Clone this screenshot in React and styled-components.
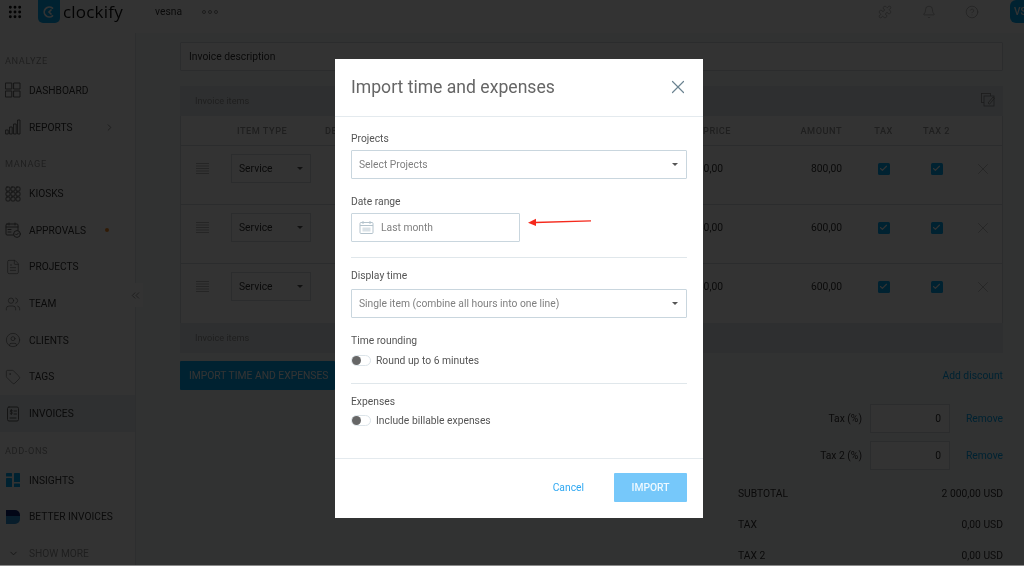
import React from 'react';
import styled, { createGlobalStyle } from 'styled-components';
import { FileText, Users, CircleUser, Tag, ChevronDown, ChevronRight, ChevronsLeft, Bell, CircleHelp, Puzzle, X, Check, Grip } from 'lucide-react';

const Global = createGlobalStyle`
  html, body { margin: 0; padding: 0; background: #8a8a8a; overflow: hidden; }
  body { font-family: Roboto, "Liberation Sans", sans-serif; }
  * { box-sizing: border-box; }
`;

const Page = styled.div`
  position: relative; width: 1024px; height: 565px; overflow: hidden;
  background: #fff; color: #333; font-size: 10.3px; filter: blur(.4px);
`;
const TopBar = styled.header`
  height: 33px; display: flex; align-items: flex-start; background: #fff;
`;
const Apps = styled.div`
  width: 38px; height: 24px; padding-left: 7px; display: flex; align-items: center;
`;
const LogoMark = styled.div`
  width: 22px; height: 23px; border-radius: 0 0 5px 5px; background: #03a9f4;
  display: flex; align-items: center; justify-content: center;
`;
const LogoText = styled.span`
  margin-left: 3px; font-size: 17px; line-height: 23px; font-weight: 500; letter-spacing: .2px; color: #111;
  font-family: "Open Sans", Roboto, sans-serif; width: 92px; 
`;
const Workspace = styled.span`font-size: 10.3px; line-height: 24px; width: 47px;`;
const Dots = styled.div`
  display: flex; gap: 2px; height: 24px; align-items: center;
`;
const Dot = styled.i`
  width: 4px; height: 4px; border-radius: 50%; border: 1px solid #888; display: block;
`;
const TopRight = styled.div`
  margin-left: auto; display: flex; align-items: flex-start; color: #888;
`;
const TopIcon = styled.div`
  width: 43.5px; height: 23px; display: flex; align-items: center; justify-content: center;
`;
const Avatar = styled.div`
  width: 14px; height: 23px; margin-left: 16px; border-radius: 6px 0 0 6px; background: #03a9f4; color: #fff;
  font-size: 10px; font-weight: 500; line-height: 23px; padding-left: 4px; overflow: hidden; white-space: nowrap;
`;
const Body = styled.div`display: flex; height: 532px;`;
const Sidebar = styled.nav`
  position: relative; width: 136px; flex: none; border-right: 1px solid #dfe5e9; padding-top: 17px;
`;
const Section = styled.div`
  height: 22px; line-height: 22px; padding-left: 5px; font-size: 9.2px; letter-spacing: .6px; color: #9a9a9a;
`;
const Item = styled.div`
  height: 36.7px; display: flex; align-items: center; padding-left: 5px; gap: 8px; font-size: 10.2px; color: ${p => p.$muted ? '#999' : '#333'};
  background: ${p => p.$active ? '#e8eef2' : 'transparent'};
`;
const IconBox = styled.span`
  width: 16px; height: 16px; flex: none; display: flex; align-items: center; justify-content: center; color: #666;
`;
const ItemGap = styled.div`height: 7.8px;`;
const Notice = styled.i`
  width: 4px; height: 4px; border-radius: 50%; background: #f5871f; margin-left: 11px;
`;
const Caret = styled.span`margin-left: 24px; display: flex; color: #888;`;
const Collapse = styled.div`
  position: absolute; right: -8px; top: 250px; width: 16px; height: 24px; background: #fff;
  display: flex; align-items: center; justify-content: center; color: #666;
`;
const Main = styled.main`
  flex: 1; background: #f6f8f9; padding: 9px 21px 0 44px; min-width: 0;
`;
const DescInput = styled.div`
  height: 29px; line-height: 27px; border: 1px solid #d5dde2; background: #fff; padding-left: 8px; border-radius: 1px;
`;
const Band = styled.div`
  height: 30px; margin-top: ${p => p.$top || 0}px; background: #e4eaee; display: flex; align-items: center; justify-content: space-between;
  padding: 0 7px 2px 15px; font-size: 9.2px; color: #999;
`;
const Table = styled.div`border: 1px solid #d5dde2; border-width: 0 1px; background: #fff;`;
const Cols = styled.div`
  display: grid; grid-template-columns: 50px 94px 290px 116px 126px 53px 53px 1fr; border-bottom: 1px solid #d5dde2;
`;
const HeadRow = styled(Cols)`
  height: 30px; align-items: center; font-size: 9.2px; letter-spacing: .5px; color: #999; font-weight: 500;
`;
const Row = styled(Cols)`
  height: 59px; padding-top: 8px; align-items: start;
  &:last-child { border-bottom: 0; }
`;
const HeadCell = styled.div`
  white-space: nowrap; text-align: ${p => p.$align || 'left'}; padding: ${p => p.$pad || 0};
`;
const Cell = styled.div`
  height: 29px; display: flex; align-items: center; justify-content: ${p => p.$justify || 'flex-start'}; padding: ${p => p.$pad || 0}; color: ${p => p.$color || 'inherit'};
`;
const SmallSelect = styled.div`
  width: 80px; height: 29px; border: 1px solid #d5dde2; padding: 0 7px; display: flex; align-items: center; justify-content: space-between;
`;
const TriCaret = styled.i`
  display: block; width: 0; height: 0; border: 3px solid transparent; border-top-color: #555; border-bottom-width: 0;
`;
const Check2 = styled.span`
  width: 12px; height: 12px; border-radius: 1.5px; background: #03a9f4; color: #fff; display: flex; align-items: center; justify-content: center;
`;
const Actions = styled.div`
  display: flex; align-items: center; justify-content: space-between; margin-top: 8px;
`;
const ImportBtn = styled.div`
  width: 155px; height: 29px; background: #03a9f4; color: #fff; line-height: 29px; padding-left: 9px; border-radius: 1px; white-space: nowrap; overflow: hidden;
`;
const Link = styled.span`color: #03a9f4;`;
const TaxRow = styled.div`
  display: flex; justify-content: flex-end; align-items: center; height: 29px; margin-top: ${p => p.$top}px;
`;
const TaxBox = styled.div`
  width: 80px; height: 29px; margin: 0 16px 0 8px; border: 1px solid #d5dde2; background: #fff; text-align: right; line-height: 27px; padding-right: 8px;
`;
const TaxLink = styled(Link)`width: 37px; text-align: right;`;
const Totals = styled.div`margin: 8px 0 0 558px;`;
const Total = styled.div`
  display: flex; justify-content: space-between; height: 31px; align-items: center;
`;
const Overlay = styled.div`
  position: absolute; inset: 0; background: rgba(0,0,0,.8); padding: 59px 0 0 335px;
`;
const Modal = styled.section`
  position: relative; width: 368px; height: 458.5px; background: #fff; color: #555; display: flex; flex-direction: column;
`;
const ModalHead = styled.div`
  height: 57.5px; flex: none; border-bottom: 1px solid #e4eaee; display: flex; align-items: center; justify-content: space-between; padding: 0 14px 0 16px;
`;
const Title = styled.h2`
  margin: 0; font-size: 17.6px; font-weight: 400; color: #666;
`;
const CloseIcon = styled.span`display: flex; color: #6b8391;`;
const ModalBody = styled.div`flex: 1; padding: 15px 16px 0;`;
const Label = styled.div`
  height: 14px; line-height: 14px; color: #555; margin-top: ${p => p.$top || 0}px;
`;
const Picker = styled.div`
  height: 29px; width: ${p => p.$w || 336}px; margin-top: ${p => p.$top ?? 4}px; border: 1px solid #c9d6de; border-radius: 1px; padding: 0 8px 0 7px; display: flex; align-items: center; gap: 7px; color: #808080;
`;
const PickerText = styled.span`flex: 1;`;
const Divider = styled.div`height: 1px; background: #e0e7eb; margin-top: ${p => p.$top}px;`;
const SwitchRow = styled.div`display: flex; align-items: center; gap: 5px; height: 14px; margin-top: ${p => p.$top}px; color: #555;`;
const Track = styled.span`
  width: 20px; height: 11px; border: 1px solid #dce4e9; border-radius: 6px; background: #fff; position: relative; display: block; flex: none;
`;
const Knob = styled.i`
  position: absolute; left: 0; top: 0; width: 9px; height: 9px; border-radius: 50%; background: #666;
`;
const ModalFoot = styled.div`
  height: 59.5px; flex: none; border-top: 1px solid #e4eaee; display: flex; align-items: center; justify-content: flex-end; padding: 0 16px 2px 0; gap: 30px;
`;
const Cancel = styled.span`color: #2fa8f2;`;
const SubmitBtn = styled.div`
  width: 73px; height: 29px; background: #76c8fa; color: #eef9ff; font-weight: 500; text-align: center; line-height: 29px; border-radius: 1px;
`;
const Arrow = styled.svg`position: absolute; left: 192px; top: 157px;`;

const S = { fill: 'none', stroke: 'currentColor', strokeWidth: 1, strokeLinecap: 'round', strokeLinejoin: 'round' };
const Svg = ({ children, size = 16 }) => <svg width={size} height={size} viewBox="0 0 16 16" {...S}>{children}</svg>;

const DashIcon = () => <Svg><rect x=".8" y="1" width="6" height="6" /><rect x="9" y="1" width="6" height="6" /><rect x=".8" y="9" width="6" height="6" /><rect x="9" y="9" width="6" height="6" /></Svg>;
const ReportsIcon = () => <Svg><rect x="1" y="11" width="2.2" height="4" /><rect x="5" y="8" width="2.2" height="7" /><rect x="9" y="5" width="2.2" height="10" /><rect x="13" y="1" width="2" height="14" /></Svg>;
const KioskIcon = () => <Svg>{[1, 6, 11].flatMap(y => [1, 6, 11].map(x => <rect key={`${x}${y}`} x={x} y={y} width="4" height="4" rx="1" />))}</Svg>;
const ApprovalIcon = () => <Svg><rect x="1" y="2" width="12" height="11" rx="1" /><path d="M1 5h12M4 1v2M10 1v2M3 7.5h3M3 10h3" /><circle cx="12" cy="12" r="3.4" fill="#fff" /><path d="M10.5 12l1 1 2-2" /></Svg>;
const InvoiceIcon = () => <Svg><rect x="2.5" y="1" width="11" height="14" rx="1.5" /><path d="M9 5h2.5M9 8h2.5M5 12h6M6.3 3.5v5M7.4 4.6c-.8-.7-2.2-.4-2.2.5 0 1.100 2.200.8 2.200 1.900 0 .9-1.500 1.200-2.300.5" /></Svg>;
const InsightsIcon = () => <svg width="16" height="16" viewBox="0 0 16 16"><g fill="#03a9f4"><rect x="1" y="1" width="6" height="3.500" rx=".6" /><rect x="1" y="6" width="6" height="9" rx=".6" /><rect x="9" y="1" width="6" height="9" rx=".6" /><rect x="9" y="11.500" width="6" height="3.500" rx=".6" /></g></svg>;
const BetterIcon = () => <svg width="16" height="16" viewBox="0 0 16 16"><path d="M1 1h9a5 5 0 0 1 5 5v1H1z" fill="#0d1e6e" /><path d="M1 7h14v3a5 5 0 0 1-5 5H1z" fill="#2b8fd6" /></svg>;
const CalIcon = () => <svg width="15" height="15" viewBox="0 0 15 15" fill="none" stroke="#b4c3cc"><rect x="1" y="2.500" width="13" height="11" rx="1" /><path d="M1 5.500h13M4 1v3M11 1v3" /><rect x="3.500" y="7.500" width="8" height="4" fill="#d9e1e6" stroke="none" /></svg>;
const DragIcon = () => <svg width="13" height="11" viewBox="0 0 13 11" stroke="#999" strokeWidth=".7"><path d="M0 .5h13M0 3h13M0 5.500h13M0 8h13M0 10.500h13" /></svg>;
const CopyEdit = () => <svg width="15" height="14" viewBox="0 0 15 14" fill="none" stroke="#888" strokeWidth=".8"><rect x=".5" y=".5" width="9" height="9" /><rect x="3" y="3" width="10" height="10" fill="#e4eaee" /><path d="M7 10l5-6 1.500 1.200-5 6z" /></svg>;
const ClockMark = () => <svg width="14" height="14" viewBox="0 0 14 14" fill="none" stroke="#fff" strokeWidth="1.700" strokeLinecap="round"><path d="M10.500 3.200A5 5 0 1 0 10.500 10.800" /><path d="M9 5L7 7l2 2" /></svg>;

const NavItem = ({ icon, children, ...rest }) => (
  <Item {...rest}><IconBox>{icon}</IconBox>{children}</Item>
);

const rows = [['00,00', '800,00'], ['50,00', '600,00'], ['50,00', '600,00']];

export default function App() {
  return (
    <Page>
      <Global />
      <TopBar>
        <Apps><Grip size={16} strokeWidth={2.4} color="#111" /></Apps>
        <LogoMark><ClockMark /></LogoMark>
        <LogoText>clockify</LogoText>
        <Workspace>vesna</Workspace>
        <Dots><Dot /><Dot /><Dot /></Dots>
        <TopRight>
          <TopIcon><Puzzle size={14} strokeWidth={1} /></TopIcon>
          <TopIcon><Bell size={14} strokeWidth={1} /></TopIcon>
          <TopIcon><CircleHelp size={14} strokeWidth={1} /></TopIcon>
          <Avatar>VS</Avatar>
        </TopRight>
      </TopBar>
      <Body>
        <Sidebar>
          <Section>ANALYZE</Section>
          <NavItem icon={<DashIcon />}>DASHBOARD</NavItem>
          <NavItem icon={<ReportsIcon />}>REPORTS<Caret><ChevronRight size={11} /></Caret></NavItem>
          <ItemGap />
          <Section>MANAGE</Section>
          <NavItem icon={<KioskIcon />}>KIOSKS</NavItem>
          <NavItem icon={<ApprovalIcon />}>APPROVALS<Notice /></NavItem>
          <NavItem icon={<FileText size={16} strokeWidth={1} />}>PROJECTS</NavItem>
          <NavItem icon={<Users size={16} strokeWidth={1} />}>TEAM</NavItem>
          <NavItem icon={<CircleUser size={16} strokeWidth={1} />}>CLIENTS</NavItem>
          <NavItem icon={<Tag size={16} strokeWidth={1} />}>TAGS</NavItem>
          <NavItem $active icon={<InvoiceIcon />}>INVOICES</NavItem>
          <ItemGap />
          <Section>ADD-ONS</Section>
          <NavItem icon={<InsightsIcon />}>INSIGHTS</NavItem>
          <NavItem icon={<BetterIcon />}>BETTER INVOICES</NavItem>
          <NavItem $muted icon={<ChevronDown size={11} />}>SHOW MORE</NavItem>
          <Collapse><ChevronsLeft size={13} strokeWidth={1.2} /></Collapse>
        </Sidebar>
        <Main>
          <DescInput>Invoice description</DescInput>
          <Band $top={15}>Invoice items<CopyEdit /></Band>
          <Table>
            <HeadRow>
              <span />
              <HeadCell $pad="0 0 0 6px">ITEM TYPE</HeadCell>
              <HeadCell>DESCRIPTION</HeadCell>
              <HeadCell $align="right">PRICE</HeadCell>
              <HeadCell $align="right" $pad="0 15px 0 0">AMOUNT</HeadCell>
              <HeadCell $align="center">TAX</HeadCell>
              <HeadCell $align="center">TAX 2</HeadCell>
              <span />
            </HeadRow>
            {rows.map(([price, amount], i) => (
              <Row key={i}>
                <Cell $justify="center" $pad="0 8px 0 0"><DragIcon /></Cell>
                <Cell><SmallSelect>Service<TriCaret /></SmallSelect></Cell>
                <span />
                <Cell $justify="flex-end" $pad="0 8px 0 0">{price}</Cell>
                <Cell $justify="flex-end" $pad="0 15px 0 0">{amount}</Cell>
                <Cell $justify="center"><Check2><Check size={9} strokeWidth={3} /></Check2></Cell>
                <Cell $justify="center"><Check2><Check size={9} strokeWidth={3} /></Check2></Cell>
                <Cell $justify="center" $color="#888"><X size={18} strokeWidth={.7} /></Cell>
              </Row>
            ))}
          </Table>
          <Band>Invoice items</Band>
          <Actions>
            <ImportBtn>IMPORT TIME AND EXPENSES</ImportBtn>
            <Link>Add discount</Link>
          </Actions>
          <TaxRow $top={14}>Tax (%)<TaxBox>0</TaxBox><TaxLink>Remove</TaxLink></TaxRow>
          <TaxRow $top={8}>Tax 2 (%)<TaxBox>0</TaxBox><TaxLink>Remove</TaxLink></TaxRow>
          <Totals>
            <Total><span>SUBTOTAL</span><span>2 000,00 USD</span></Total>
            <Total><span>TAX</span><span>0,00 USD</span></Total>
            <Total><span>TAX 2</span><span>0,00 USD</span></Total>
          </Totals>
        </Main>
      </Body>
      <Overlay>
        <Modal>
          <ModalHead>
            <Title>Import time and expenses</Title>
            <CloseIcon><X size={22} strokeWidth={1.3} /></CloseIcon>
          </ModalHead>
          <ModalBody>
            <Label>Projects</Label>
            <Picker><PickerText>Select Projects</PickerText><TriCaret /></Picker>
            <Label $top={16}>Date range</Label>
            <Picker $w={169}><CalIcon /><PickerText>Last month</PickerText></Picker>
            <Divider $top={15} />
            <Label $top={11}>Display time</Label>
            <Picker $top={6}><PickerText>Single item (combine all hours into one line)</PickerText><TriCaret /></Picker>
            <Label $top={16}>Time rounding</Label>
            <SwitchRow $top={6}><Track><Knob /></Track>Round up to 6 minutes</SwitchRow>
            <Divider $top={15} />
            <Label $top={11}>Expenses</Label>
            <SwitchRow $top={5}><Track><Knob /></Track>Include billable expenses</SwitchRow>
          </ModalBody>
          <ModalFoot>
            <Cancel>Cancel</Cancel>
            <SubmitBtn>IMPORT</SubmitBtn>
          </ModalFoot>
          <Arrow width="66" height="12" viewBox="0 0 66 12">
            <path d="M8 6.500L64 4.800" stroke="#f5291c" strokeWidth="1.300" />
            <path d="M1 6.700L9 2.800V10z" fill="#f5291c" />
          </Arrow>
        </Modal>
      </Overlay>
    </Page>
  );
}
